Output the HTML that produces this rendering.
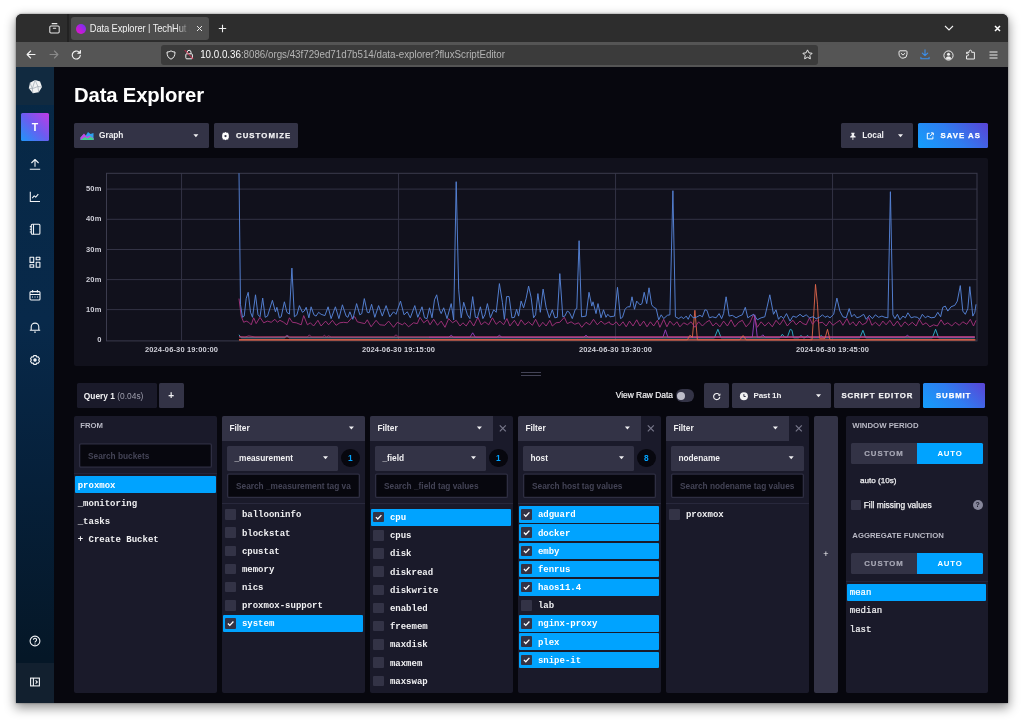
<!DOCTYPE html>
<html>
<head>
<meta charset="utf-8">
<title>Data Explorer</title>
<style>
*{box-sizing:border-box;margin:0;padding:0}
html,body{width:1024px;height:721px;overflow:hidden;background:#fff;font-family:"Liberation Sans",sans-serif;}
.abs{position:absolute}
#win{position:absolute;left:16px;top:14px;width:992px;height:689px;background:#07070e;will-change:transform;border-radius:6px 6px 0 0;overflow:hidden;}
#shadow{position:absolute;left:16px;top:14px;width:992px;height:689px;border-radius:6px 6px 0 0;box-shadow:0 4px 11px 1px rgba(0,0,0,.42),0 0 2px rgba(0,0,0,.5);}
#tabbar{position:absolute;left:0;top:0;width:992px;height:28px;background:#2d2d2d;}
#navbar{position:absolute;left:0;top:28px;width:992px;height:25px;background:#555555;}
#side{position:absolute;left:0;top:53px;width:38px;height:636px;background:linear-gradient(180deg,#072845 0%,#08294a 40%,#06203a 65%,#051727 93%,#051727 100%);}
.t{position:absolute;white-space:nowrap;line-height:1;color:#fff}
.b{font-weight:bold}
.mono{font-family:"Liberation Mono",monospace}
.btn{position:absolute;background:#333346;border-radius:1px}
.card{position:absolute;background:#1a1a2a;border-radius:2px;top:402px;height:276px;width:143px}
.inp{position:absolute;background:#07070e;border:1px solid #333346;border-radius:1px}
.row{position:absolute;height:17px;background:#00a3ff;border-radius:1px}
.cb{position:absolute;width:10px;height:10px;background:#333346;border-radius:1px}
.li{position:absolute;white-space:nowrap;line-height:1;color:#f1f1f3;font-family:"Liberation Mono",monospace;font-size:9px;font-weight:bold}
</style>
</head>
<body>
<div id="shadow"></div>
<div id="win">
<div id="tabbar"></div>
<div id="navbar"></div>

<!-- tab bar -->
<svg class="abs" style="left:32.800px;top:8.600px" width="11" height="11" viewBox="0 0 11 11" fill="none" stroke="#e8e8e8" stroke-width="1.050"><path d="M2.700 0.700h5.600" stroke-width="1.300"/><rect x="0.800" y="2.900" width="9.400" height="7" rx="1.100"/><path d="M4.300 5.300h2.400" stroke-linecap="round" stroke-width="1.100"/></svg>
<div class="abs" style="left:51px;top:0;width:1.600px;height:28px;background:#222222"></div>
<div class="abs" style="left:55px;top:3px;width:138px;height:22.5px;background:#4e4e4e;border-radius:3px"></div>
<div class="abs" style="left:60px;top:9.5px;width:10px;height:10px;border-radius:50%;background:linear-gradient(45deg,#e21bc4 0%,#c01ad8 40%,#8a2bea 75%,#6f2df0 100%)"></div>
<div class="t" id="tabtitle" style="left:73.8px;top:10.3px;font-size:9.4px;color:#f0f0f0;width:100px;overflow:hidden;letter-spacing:-0.12px;transform:scaleY(1.1);transform-origin:50% 80%;-webkit-mask-image:linear-gradient(90deg,#000 0,#000 86px,transparent 100px)">Data Explorer | TechHut | InfluxDB</div>
<svg class="abs" style="left:180px;top:11px" width="7" height="7" viewBox="0 0 7 7" stroke="#e6e6e6" stroke-width="1" fill="none"><path d="M1 1l5 5M6 1l-5 5"/></svg>
<svg class="abs" style="left:202px;top:10px" width="9" height="9" viewBox="0 0 9 9" stroke="#f0f0f0" stroke-width="1.1" fill="none"><path d="M4.5 0.8v7.4M0.8 4.5h7.4"/></svg>
<svg class="abs" style="left:928px;top:11px" width="10" height="6" viewBox="0 0 10 6" stroke="#f0f0f0" stroke-width="1.1" fill="none"><path d="M1 1l4 4 4-4"/></svg>
<svg class="abs" style="left:977.5px;top:11px" width="7" height="7" viewBox="0 0 7 7" stroke="#fff" stroke-width="1.5" fill="none"><path d="M1 1l5 5M6 1l-5 5"/></svg>
<!-- nav bar -->
<svg class="abs" style="left:10px;top:36px" width="10" height="9" viewBox="0 0 10 9" stroke="#f4f4f4" stroke-width="1.1" fill="none" stroke-linecap="round" stroke-linejoin="round"><path d="M9 4.5H1.2M4.6 1L1.1 4.5 4.6 8"/></svg>
<svg class="abs" style="left:33px;top:36px" width="10" height="9" viewBox="0 0 10 9" stroke="#8a8a8a" stroke-width="1.1" fill="none" stroke-linecap="round" stroke-linejoin="round"><path d="M1 4.5h7.8M5.4 1l3.5 3.5L5.4 8"/></svg>
<svg class="abs" style="left:55px;top:35.5px" width="11" height="10" viewBox="0 0 11 10" stroke="#f4f4f4" stroke-width="1.1" fill="none" stroke-linecap="round"><path d="M9.3 5.2a4 4 0 1 1-1.3-3.1"/><path d="M9.4 0.6v2.6H6.8" fill="#f4f4f4" stroke-linejoin="round"/></svg>
<div class="abs" style="left:145px;top:30.5px;width:656.5px;height:20px;background:#3b3b3b;border-radius:3px"></div>
<svg class="abs" style="left:149.5px;top:35.5px" width="10" height="10" viewBox="0 0 10 10" stroke="#ededed" stroke-width="1" fill="none" stroke-linejoin="round"><path d="M5 0.8C3.8 1.7 2.4 2 1 2c0 3.4 1 5.9 4 7.2 3-1.3 4-3.8 4-7.2-1.4 0-2.8-.3-4-1.200z"/></svg>
<svg class="abs" style="left:167.5px;top:35px" width="10" height="11" viewBox="0 0 10 11" fill="none" stroke="#ededed" stroke-width="1"><path d="M3.2 4.8V3.2a1.9 1.9 0 0 1 3.800 0v1.6"/><rect x="1.800" y="4.800" width="6.600" height="5" rx="1"/><path d="M0.800 1.200l8.400 8.800" stroke="#e22850" stroke-width="1"/></svg>
<div class="t" style="left:184.200px;top:35.800px;font-size:9.800px;color:#fbfbfb;letter-spacing:-0.020px;transform:scaleY(1.050);transform-origin:50% 80%">10.0.0.36<span style="color:#b4b4b4">:8086/orgs/43f729ed71d7b514/data-explorer?fluxScriptEditor</span></div>
<svg class="abs" style="left:786px;top:35px" width="11" height="11" viewBox="0 0 10 10" stroke="#ededed" stroke-width="0.9" fill="none" stroke-linejoin="round"><path d="M5 0.800l1.300 2.700 2.900.4-2.100 2.100.5 2.900L5 7.500 2.400 8.900l.5-2.900L.8 3.900l2.900-.4z"/></svg>
<svg class="abs" style="left:881.5px;top:36px" width="10" height="9" viewBox="0 0 10 9" stroke="#ededed" stroke-width="1" fill="none" stroke-linecap="round" stroke-linejoin="round"><path d="M1 1.800a1 1 0 0 1 1-1h6a1 1 0 0 1 1 1v2.400a4 4 0 0 1-8 0z"/><path d="M3.200 3.400L5 5.100l1.800-1.700"/></svg>
<svg class="abs" style="left:904px;top:35px" width="10" height="11" viewBox="0 0 10 11" stroke="#3b8eea" stroke-width="1.1" fill="none" stroke-linecap="round" stroke-linejoin="round"><path d="M5 0.800v5.800M2.300 4.100L5 6.700l2.700-2.600M0.900 8.300v1.500h8.200V8.300"/></svg>
<svg class="abs" style="left:926.5px;top:35.500px" width="11" height="11" viewBox="0 0 11 11" fill="none" stroke="#ededed" stroke-width="1"><circle cx="5.500" cy="5.500" r="4.600"/><circle cx="5.500" cy="4.200" r="1.500" fill="#ededed" stroke="none"/><path d="M2.600 8.300c.6-1.300 1.700-1.800 2.900-1.800s2.300.5 2.900 1.800c-.8.900-1.800 1.300-2.900 1.300s-2.100-.4-2.900-1.300z" fill="#ededed" stroke="none"/></svg>
<svg class="abs" style="left:949px;top:35px" width="11" height="11" viewBox="0 0 11 11" fill="none" stroke="#ededed" stroke-width="1" stroke-linejoin="round"><path d="M1.500 10V6.800h.9a1.100 1.100 0 0 0 0-2.200h-.9V3.300h2.700v-.900a1.200 1.200 0 0 1 2.400 0v.9h2.800V10z"/></svg>
<svg class="abs" style="left:972.500px;top:37px" width="9" height="8" viewBox="0 0 9 8" stroke="#ededed" stroke-width="1.100" fill="none"><path d="M0.500 1h8M0.500 4h8M0.500 7h8"/></svg>
<div id="side"></div>
<!--MAIN-->
<div class="abs" style="left:0px;top:53px;width:38px;height:38px;background:#112a40;"></div>
<div class="abs" style="left:0px;top:649px;width:38px;height:40px;background:#12202f;"></div>
<svg class="abs" style="left:12px;top:65px;overflow:visible;" width="15" height="15"><g transform="translate(0.3 0.7)"><path d="M6.800 0.300L11.800 1.900 13.700 7.300 10.400 12.600 4.600 13.500 0.500 8.600 1.700 3z" fill="#f1f2f3"/><path d="M6.800 0.300L9.600 6.800 13.700 7.300M9.600 6.800L4 9 0.500 8.600M4 9L6.800 0.300M4 9L4.600 13.500M9.600 6.800L10.400 12.600M1.700 3L4 9" stroke="#8f9aa6" stroke-width="0.600" fill="none"/></g></svg>
<div class="abs" style="left:5px;top:99px;width:28px;height:27.5px;background:linear-gradient(45deg,#1e96f8 0%,#6a5df0 50%,#c03ae6 100%);border-radius:1.500px"></div>
<div class="t b " style="left:15.85px;top:107.8px;font-size:10.5px;color:#fff;">T</div>
<svg class="abs" style="left:13px;top:144px;overflow:visible;" width="13" height="13"><g transform="translate(0 0.3)"><g fill="none" stroke="#f1f3f6" stroke-width="1.100" stroke-linejoin="round"><path d="M6 8.400V1.400M2.400 4.700L6 1.200 9.600 4.700M0.800 10.900h10.400"/></g></g></svg>
<svg class="abs" style="left:13px;top:176px;overflow:visible;" width="13" height="13"><g transform="translate(0 0.8)"><g fill="none" stroke="#f1f3f6" stroke-width="1.100" stroke-linejoin="round"><path d="M1.300 1v9.700H11M3.200 7.300l2-2.300 1.500 1.300 2.600-3"/></g></g></svg>
<svg class="abs" style="left:13px;top:209px;overflow:visible;" width="13" height="13"><g transform="translate(0 0.3)"><g fill="none" stroke="#f1f3f6" stroke-width="1.100" stroke-linejoin="round"><rect x="2.300" y="1" width="8.600" height="10" rx="1"/><path d="M4.500 1v10M0.800 3.300h1.500M0.800 6h1.500M0.800 8.700h1.500"/></g></g></svg>
<svg class="abs" style="left:13px;top:242px;overflow:visible;" width="13" height="13"><g transform="translate(0 0.2)"><g fill="none" stroke="#f1f3f6" stroke-width="1.100" stroke-linejoin="round"><rect x="1" y="1" width="3.700" height="5.200"/><rect x="7.200" y="1" width="3.700" height="2.600"/><rect x="1" y="8.600" width="3.700" height="2.400"/><rect x="7.200" y="6" width="3.700" height="5"/></g></g></svg>
<svg class="abs" style="left:13px;top:275px;overflow:visible;" width="13" height="13"><g transform="translate(0 0.2)"><g fill="none" stroke="#f1f3f6" stroke-width="1.100" stroke-linejoin="round"><rect x="1" y="2.400" width="10" height="8.400" rx="1"/><path d="M1 5.300h10M3.600 0.800v2.600M8.400 0.800v2.600M3 7.800h1M5.500 7.800h1M8 7.800h1"/></g></g></svg>
<svg class="abs" style="left:13px;top:307px;overflow:visible;" width="13" height="13"><g transform="translate(0 0.5)"><g fill="none" stroke="#f1f3f6" stroke-width="1.100" stroke-linejoin="round"><path d="M2.200 8.600V5.400a3.800 3.800 0 0 1 7.600 0v3.200M0.800 8.700h10.400M5.200 10.600h1.600"/></g></g></svg>
<svg class="abs" style="left:13px;top:340px;overflow:visible;" width="13" height="13"><g transform="translate(0 0)"><g fill="none" stroke="#f1f3f6" stroke-width="1.100" stroke-linejoin="round"><path d="M4.700 0.900h2.600l.5 1.400 1.400-.3 1.300 2.200-1 1.100 1 1.100-1.300 2.200-1.400-.300-.5 1.400H4.700l-.5-1.400-1.400.3L1.500 6.400l1-1.100-1-1.100 1.300-2.200 1.400.3z" transform="translate(0 0.700)"/><circle cx="6" cy="6" r="1.200" fill="#f1f3f6"/></g></g></svg>
<svg class="abs" style="left:13px;top:621px;overflow:visible;" width="13" height="13"><g transform="translate(0 0)"><g fill="none" stroke="#f1f3f6" stroke-width="1.100" stroke-linejoin="round"><circle cx="6" cy="6" r="4.900"/><path d="M4.400 4.800a1.600 1.600 0 1 1 2.400 1.400c-.5.300-.8.600-.8 1.200M6 8.600v.9"/></g></g></svg>
<svg class="abs" style="left:14px;top:663px;overflow:visible;" width="11" height="10"><g transform="translate(0 0.5)"><g fill="none" stroke="#f1f3f6" stroke-width="1.100"><rect x="0.600" y="0.600" width="8.800" height="7.800"/><path d="M3.400 0.600v7.800M5.600 2.800l1.700 1.700-1.700 1.700" /></g></g></svg>
<div class="t b " id="title" style="left:58px;top:70.5px;font-size:20.3px;color:#ffffff;letter-spacing:-0.15px">Data Explorer</div>
<div class="abs" style="left:58px;top:109px;width:134.5px;height:25px;background:#333346;border-radius:1.500px"></div>
<svg class="abs" style="left:64px;top:117px;overflow:visible;" width="14" height="10"><g transform="translate(0.5 0)"><path d="M0 9V6.500L3 3.500 5 5 7.500 1 10 3 13 2V9z" fill="#2fa0ee"/><path d="M0 9V6.500L3.500 2.500 6.500 6 9 4.500 13 7V9z" fill="#c04be6"/><path d="M0 9L4.500 6 7 7.500 10 5.500 13 7.500V9z" fill="#3fd08e"/></g></svg>
<div class="t b " id="gtxt" style="left:83px;top:116.9px;font-size:8.3px;color:#f1f1f3;">Graph</div>
<svg class="abs" style="left:177px;top:120px;overflow:visible;" width="6" height="4"><g transform="translate(0.4 0.2)"><path d="M0 0h5L2.500 3z" fill="#f1f1f3"/></g></svg>
<div class="abs" style="left:197.5px;top:109px;width:84.5px;height:25px;background:#333346;border-radius:1.500px"></div>
<svg class="abs" style="left:205px;top:117px;overflow:visible;" width="9" height="10"><g transform="translate(0.8 0.9)"><path d="M3.700 0L4.900 0.900 6.400 0.800 6.600 2.300 7.400 3.200 6.700 4.200 7.400 5.200 6.600 6.100 6.400 7.600 4.900 7.500 3.700 8.400 2.500 7.500 1 7.600 0.800 6.100 0 5.200 0.700 4.200 0 3.200 0.800 2.300 1 0.800 2.500 0.900z" fill="#fff"/><circle cx="3.700" cy="4.200" r="1.150" fill="#333346"/></g></svg>
<div class="t b " id="custxt" style="left:220px;top:117.6px;font-size:7.8px;color:#f1f1f3;letter-spacing:1.050px;-webkit-text-stroke:0.250px #f1f1f3">CUSTOMIZE</div>
<div class="abs" style="left:825px;top:109px;width:72px;height:25px;background:#333346;border-radius:1.500px"></div>
<svg class="abs" style="left:834px;top:118px;overflow:visible;" width="7" height="9"><g transform="translate(0.2 0.8)"><path d="M1 0h3.400v0.900h-0.500v1.900l1.500 1v1H3.100v2.400H2.300V4.800H0v-1l1.500-1V0.900H1z" fill="#f1f1f3"/></g></svg>
<div class="t b " id="loctxt" style="left:846.2px;top:116.9px;font-size:8.3px;color:#f1f1f3;">Local</div>
<svg class="abs" style="left:882px;top:120px;overflow:visible;" width="6" height="4"><g transform="translate(0 0.3)"><path d="M0 0h5L2.500 3z" fill="#f1f1f3"/></g></svg>
<div class="abs" style="left:902px;top:109px;width:70px;height:25px;background:linear-gradient(45deg,#139ffb 0%,#2f7df0 50%,#5a43d6 100%);border-radius:1.500px"></div>
<svg class="abs" style="left:910px;top:118px;overflow:visible;" width="9" height="9"><g transform="translate(0.7 0.3)"><g fill="none" stroke="#fff" stroke-width="1"><path d="M3 1H0.600v5.600h5.600V4.200"/><path d="M4.200 0.600h2.400v2.400M6.400 0.800L3.400 3.800"/></g></g></svg>
<div class="t b " id="savetxt" style="left:924.5px;top:117.5px;font-size:7.8px;color:#fff;letter-spacing:1.000px;-webkit-text-stroke:0.250px #fff">SAVE AS</div>
<div class="abs" style="left:58px;top:144px;width:914px;height:208px;background:#11111c;border-radius:2px"></div>
<svg class="abs" style="left:0;top:0" width="992" height="689" viewBox="0 0 992 689"><path d="M90.5 175.1H961" stroke="#333345" stroke-width="1"/><path d="M90.5 205.3H961" stroke="#333345" stroke-width="1"/><path d="M90.5 235.5H961" stroke="#333345" stroke-width="1"/><path d="M90.5 265.6H961" stroke="#333345" stroke-width="1"/><path d="M90.5 295.6H961" stroke="#333345" stroke-width="1"/><path d="M165.56 159.3V326.9" stroke="#333345" stroke-width="1"/><path d="M382.56 159.3V326.9" stroke="#333345" stroke-width="1"/><path d="M599.56 159.3V326.9" stroke="#333345" stroke-width="1"/><path d="M816.56 159.3V326.9" stroke="#333345" stroke-width="1"/><rect x="90.5" y="159.3" width="870.5" height="167.6" fill="none" stroke="#3b3b4d" stroke-width="1"/><polyline points="223.0,320.8 225.2,323.8 268.9,323.8 270.9,321.8 273.4,323.8 698.4,323.8 701.9,315.3 705.1,323.8 763.8,323.8 766.3,320.3 768.8,323.3 771.3,323.3 774.0,315.8 774.3,315.3 776.0,316.3 777.5,323.8 777.7,323.8 782.5,323.8 785.0,321.5 787.5,323.8 789.0,323.8 791.5,321.5 794.0,323.8 802.7,323.8 805.2,321.5 807.7,323.8 843.9,323.8 846.9,316.3 849.7,323.8 916.3,323.8 919.6,315.3 922.6,323.8 958.8,323.8" fill="none" stroke="#31b4d3" stroke-width="0.9" stroke-linejoin="round"/><polyline points="223.0,322.5 229.0,323.0 232.7,321.8 239.0,323.0 268.9,322.8 270.9,321.3 273.9,323.0 291.4,323.0 293.4,320.8 295.4,323.0 306.4,323.0 308.4,321.3 310.4,323.0 312.6,321.8 315.1,323.0 377.5,323.0 380.0,320.8 382.5,323.0 958.8,322.5" fill="none" stroke="#b13a8e" stroke-width="0.7" stroke-linejoin="round"/><polyline points="413.0,323.3 432.7,323.3 435.2,321.3 437.7,323.3 453.9,323.3 456.7,318.8 459.4,323.3 480.9,323.3 483.4,321.3 485.9,323.3 567.5,323.3 570.0,321.3 572.5,323.3 646.9,323.3 649.4,315.8 651.9,323.3 736.3,323.3 738.8,300.8 741.3,323.3 744.3,323.3 746.8,320.8 749.3,323.3 888.9,323.3 891.4,321.3 893.9,323.3 958.8,323.3" fill="none" stroke="#9a41c4" stroke-width="0.9" stroke-linejoin="round"/><polyline points="223.0,323.0 958.8,323.0" fill="none" stroke="#cf4560" stroke-width="0.8" stroke-linejoin="round"/><polyline points="223.0,325.8 671.4,325.8 673.9,321.3 676.4,323.3 678.9,296.3 681.4,325.8 723.8,325.8 727.1,321.5 730.1,325.8 796.0,325.8 797.7,300.8 799.5,270.4 801.5,290.8 803.5,324.3 809.0,324.3 811.5,315.3 814.0,325.8 958.8,325.8" fill="none" stroke="#e2664c" stroke-width="0.9" stroke-linejoin="round"/><polyline points="223.0,325.9 959.5,325.9" fill="none" stroke="#e2664c" stroke-width="1.4" stroke-linejoin="round"/><polyline points="223.0,284.6 225.2,302.1 227.7,308.3 230.2,307.1 232.7,308.3 235.2,310.8 237.7,303.8 240.2,309.6 244.0,303.3 247.7,308.8 251.5,307.1 255.2,308.3 258.9,305.3 261.4,308.3 263.9,306.3 267.7,308.3 270.9,310.8 273.4,303.8 276.4,308.3 280.2,308.8 285.2,310.8 287.7,301.6 291.4,310.8 294.4,308.8 297.6,312.0 301.9,306.3 305.1,312.0 309.6,307.1 312.6,310.8 316.4,306.3 320.1,311.3 323.9,308.8 327.6,308.3 331.4,308.8 336.3,303.3 338.8,302.8 341.3,307.8 345.1,308.8 348.8,309.6 351.3,305.8 355.1,312.8 360.1,306.3 363.8,310.8 368.8,311.3 372.6,307.1 377.5,313.3 381.3,308.3 386.3,310.8 388.8,308.8 392.5,312.8 397.5,308.8 401.3,309.6 404.0,303.3 407.7,308.8 411.5,305.8 414.0,310.8 417.7,305.3 421.5,311.3 425.2,307.1 429.0,313.3 432.7,304.6 436.5,308.8 440.2,306.3 444.0,312.0 446.9,308.8 450.2,312.0 453.9,306.3 457.7,312.0 461.9,303.3 465.2,310.8 468.9,307.8 472.7,310.8 476.4,303.8 480.2,310.3 483.9,307.1 487.6,310.8 490.9,304.6 493.9,312.0 498.4,306.3 501.9,312.0 505.1,305.8 508.9,310.8 512.6,307.8 516.4,311.3 519.6,305.3 523.4,312.8 526.8,308.3 530.1,312.0 533.8,306.3 536.3,312.0 540.1,308.8 543.8,308.3 548.3,303.3 551.3,309.6 555.1,307.8 558.8,310.3 562.6,308.8 565.8,313.3 570.0,308.3 573.8,310.8 577.5,305.3 581.3,310.8 585.0,307.1 588.8,310.3 593.3,307.8 594.0,309.6 597.0,310.8 600.2,307.8 603.5,312.0 607.0,307.8 610.2,312.8 613.5,307.1 617.0,312.0 620.7,305.8 624.0,312.0 627.7,307.1 631.0,312.8 634.4,307.8 637.7,312.0 641.4,306.3 643.9,313.3 647.7,305.3 650.9,312.8 653.9,307.1 657.7,311.3 660.9,307.8 663.9,312.8 667.7,308.8 671.4,310.8 675.1,307.8 678.9,313.3 682.6,307.8 686.4,312.0 690.1,308.3 693.4,306.3 696.9,312.0 700.1,308.8 703.9,312.8 707.6,307.1 711.4,312.0 715.1,305.8 718.8,312.8 722.6,308.3 726.3,306.3 730.1,312.8 733.8,308.8 737.6,300.3 741.3,313.3 745.1,307.8 748.8,312.0 752.6,308.3 756.3,312.8 760.0,306.3 763.8,310.8 767.5,305.3 771.3,312.0 774.0,308.8 777.0,306.3 780.2,310.8 784.0,307.1 787.0,309.6 790.2,310.8 793.5,303.8 796.5,310.3 800.2,305.8 803.5,308.8 806.5,308.3 810.2,312.0 813.5,307.1 816.9,311.3 820.2,308.8 823.9,306.3 826.9,311.3 830.9,304.6 833.9,310.8 836.9,307.8 840.2,312.0 843.4,307.1 846.4,310.8 850.2,308.8 852.7,303.3 855.9,311.3 859.4,308.3 863.4,312.0 866.9,307.1 870.1,310.8 873.9,306.3 877.6,312.0 881.4,307.1 885.1,312.8 888.9,307.8 892.6,311.3 896.3,308.3 900.1,312.0 903.3,305.3 906.8,310.8 910.1,308.8 913.8,312.8 917.6,310.8 921.3,312.0 925.1,305.8 928.3,310.8 931.8,308.8 935.8,312.0 939.3,308.3 943.3,311.3 946.8,307.8 950.8,310.3 954.3,305.3 957.5,312.0 960.0,306.3" fill="none" stroke="#a8327f" stroke-width="0.9" stroke-linejoin="round"/><polyline points="223.0,159.2 224.5,290.8 226.5,303.3 228.2,302.1 230.2,284.6 232.2,278.3 234.5,298.3 236.5,303.3 239.5,280.8 242.0,300.8 244.0,302.8 246.7,284.1 249.2,303.3 251.5,302.1 256.4,286.3 259.4,297.8 260.9,293.3 263.4,303.8 265.2,302.8 268.4,287.8 270.9,298.3 273.4,300.1 275.9,254.1 278.4,302.8 280.9,300.8 283.4,291.6 286.4,298.3 288.2,297.1 290.2,293.3 292.9,303.8 295.1,292.8 297.9,300.8 300.1,302.1 302.6,298.3 305.1,300.3 308.9,301.6 312.1,292.8 315.1,304.6 319.4,292.8 322.9,304.6 326.4,290.8 330.1,302.1 331.9,303.3 333.9,297.8 336.8,305.3 340.6,289.6 343.8,300.8 345.8,299.6 348.3,284.6 351.3,298.3 353.1,298.8 355.6,290.3 358.8,303.3 362.6,291.6 366.3,302.1 370.1,291.6 373.8,302.8 377.5,297.8 380.0,300.3 384.5,287.1 388.0,300.8 391.3,297.8 394.3,303.8 398.8,291.6 401.8,303.3 406.0,292.8 408.5,303.8 411.0,304.6 413.5,293.8 416.0,303.8 418.5,285.8 420.7,280.8 423.5,295.8 425.2,299.6 427.7,293.8 431.0,304.6 435.2,289.6 437.7,305.8 440.2,167.7 442.7,275.8 445.2,303.8 447.7,288.3 451.4,300.8 453.9,304.6 456.7,282.6 459.4,303.3 461.4,303.8 464.4,292.8 466.9,304.6 468.9,300.8 471.4,289.6 474.4,303.8 477.7,295.8 480.2,298.3 483.4,269.6 486.4,288.3 488.4,305.3 490.6,282.6 493.1,282.6 495.9,303.8 498.4,303.3 500.6,295.3 502.6,302.1 505.1,287.1 507.6,293.8 510.1,284.6 512.6,272.1 515.1,283.3 517.6,303.8 519.6,300.8 521.9,279.6 524.3,298.3 527.1,275.1 530.1,293.3 533.3,303.8 536.3,295.8 538.8,303.8 541.3,303.3 543.8,259.6 546.8,302.8 548.8,302.1 551.3,297.1 553.3,298.3 556.3,304.6 559.3,295.3 560.8,294.6 563.1,226.7 565.5,302.8 570.0,302.1 573.0,278.3 575.8,292.1 577.0,287.8 580.0,299.6 582.0,289.6 585.0,303.8 587.5,295.8 590.0,303.3 591.8,300.3 594.0,302.8 598.5,302.1 601.5,273.3 604.5,304.6 606.5,303.3 609.0,295.3 611.5,292.8 614.0,292.8 616.0,282.8 618.5,295.3 620.7,287.1 624.0,290.8 626.0,289.6 628.2,278.3 630.7,289.6 633.0,273.8 635.7,290.8 637.7,293.3 640.2,294.6 642.7,305.8 645.2,300.8 647.7,304.6 651.4,301.3 653.9,300.8 656.9,176.7 659.4,302.8 662.7,304.6 665.2,302.8 667.7,304.6 670.2,302.1 672.2,305.3 674.4,300.3 677.1,303.8 680.1,303.3 683.9,301.3 686.4,302.8 688.9,295.8 690.9,296.3 693.4,303.8 696.4,302.8 700.1,303.8 703.1,299.6 705.6,304.6 707.6,299.6 710.1,282.8 713.1,302.1 716.3,301.3 720.1,303.8 723.1,302.1 726.3,300.8 729.3,293.3 731.8,303.8 734.3,302.1 737.6,300.3 741.3,305.8 745.1,303.8 748.8,302.8 751.3,292.1 753.8,280.8 757.5,300.3 760.0,295.8 762.5,305.3 765.0,302.1 767.5,304.6 770.5,299.6 774.0,307.1 777.0,302.1 780.2,303.3 784.0,300.3 787.0,302.8 790.2,300.8 793.5,303.8 797.0,302.8 800.2,304.6 803.5,303.3 806.5,300.8 809.0,303.3 811.5,302.1 814.0,303.8 817.7,300.3 820.9,284.1 823.9,297.1 826.9,302.8 830.2,303.8 833.2,294.6 835.7,302.8 838.2,300.3 840.9,303.8 843.9,302.8 847.7,300.3 850.2,305.3 853.4,301.3 856.4,304.6 859.4,300.8 862.6,303.3 865.9,302.1 868.9,303.3 871.9,303.8 874.4,177.7 876.9,300.8 878.9,304.6 881.4,300.3 883.9,305.8 886.9,302.1 889.4,303.8 891.9,298.8 895.1,303.8 898.3,302.8 901.3,303.3 903.8,305.3 906.3,300.3 909.3,303.8 911.8,302.1 915.1,303.8 918.8,303.3 921.8,298.3 924.6,302.8 926.8,293.3 929.3,292.1 931.8,297.1 935.0,292.8 938.8,291.3 941.3,287.1 944.3,271.6 946.8,297.1 949.3,300.3 951.8,294.6 953.8,272.6 956.8,302.1 958.8,298.3 960.0,290.3" fill="none" stroke="#5583d6" stroke-width="0.95" stroke-linejoin="round"/></svg>
<div class="t b ax" style="left:-16px;top:171.1px;font-size:7.5px;color:#cfcfd8;letter-spacing:0.150px;left:auto;right:906.5px">50m</div>
<div class="t b ax" style="left:-16px;top:201.3px;font-size:7.5px;color:#cfcfd8;letter-spacing:0.150px;left:auto;right:906.5px">40m</div>
<div class="t b ax" style="left:-16px;top:231.5px;font-size:7.5px;color:#cfcfd8;letter-spacing:0.150px;left:auto;right:906.5px">30m</div>
<div class="t b ax" style="left:-16px;top:261.6px;font-size:7.5px;color:#cfcfd8;letter-spacing:0.150px;left:auto;right:906.5px">20m</div>
<div class="t b ax" style="left:-16px;top:291.6px;font-size:7.5px;color:#cfcfd8;letter-spacing:0.150px;left:auto;right:906.5px">10m</div>
<div class="t b ax" style="left:-16px;top:321.5px;font-size:7.5px;color:#cfcfd8;left:auto;right:906.7px">0</div>
<div class="t b ax" style="left:115.56px;top:331.8px;font-size:7.5px;color:#cfcfd8;letter-spacing:0.150px;width:100px;text-align:center">2024-06-30 19:00:00</div>
<div class="t b ax" style="left:332.56px;top:331.8px;font-size:7.5px;color:#cfcfd8;letter-spacing:0.150px;width:100px;text-align:center">2024-06-30 19:15:00</div>
<div class="t b ax" style="left:549.56px;top:331.8px;font-size:7.5px;color:#cfcfd8;letter-spacing:0.150px;width:100px;text-align:center">2024-06-30 19:30:00</div>
<div class="t b ax" style="left:766.56px;top:331.8px;font-size:7.5px;color:#cfcfd8;letter-spacing:0.150px;width:100px;text-align:center">2024-06-30 19:45:00</div>
<div class="abs" style="left:504.5px;top:357.9px;width:20px;height:1px;background:#434356;"></div>
<div class="abs" style="left:504.5px;top:360.6px;width:20px;height:1px;background:#434356;"></div>
<div class="abs" style="left:60.5px;top:369px;width:80.5px;height:25px;background:#1a1a2a;border-radius:1.500px"></div>
<div class="t b " id="q1" style="left:67.8px;top:377.6px;font-size:8.4px;color:#f1f1f3;">Query 1 <span style="font-weight:normal;color:#9e9ead">(0.04s)</span></div>
<div class="abs" style="left:143px;top:369px;width:25px;height:25px;background:#333346;border-radius:1.500px"></div>
<div class="t b " style="left:152.3px;top:376.8px;font-size:10px;color:#f1f1f3;">+</div>
<div class="t " id="vrd" style="left:599.8px;top:377.3px;font-size:8.4px;color:#f1f1f3;-webkit-text-stroke:0.200px #f1f1f3">View Raw Data</div>
<div class="abs" style="left:659.7px;top:375.4px;width:18.6px;height:12.4px;background:#333346;border-radius:6.200px"></div>
<div class="abs" style="left:661.35px;top:377.9px;width:7.8px;height:7.8px;background:#bdbdc9;border-radius:50%"></div>
<div class="abs" style="left:688.3px;top:369px;width:25px;height:25px;background:#333346;border-radius:1.500px"></div>
<svg class="abs" style="left:696px;top:378px;overflow:visible;" width="9" height="9"><g transform="translate(0.7 0.3)"><g fill="none" stroke="#f1f1f3" stroke-width="1.100"><path d="M6.900 3.100A3.100 3.100 0 1 0 7.100 4.600"/><path d="M5.400 2.900L7.200 3.300 7.400 1.400" stroke-width="0.800"/></g></g></svg>
<div class="abs" style="left:716px;top:369px;width:99.2px;height:25px;background:#333346;border-radius:1.500px"></div>
<svg class="abs" style="left:723px;top:378px;overflow:visible;" width="9" height="9"><g transform="translate(0.9 0.3)"><circle cx="4" cy="4" r="4" fill="#f1f1f3"/><path d="M4 1.800V4.200H5.800" stroke="#333346" stroke-width="1" fill="none"/></g></svg>
<div class="t b " id="past" style="left:737.4px;top:378px;font-size:8px;color:#f1f1f3;letter-spacing:-0.080px">Past 1h</div>
<svg class="abs" style="left:800px;top:380px;overflow:visible;" width="6" height="4"><g transform="translate(0 0.3)"><path d="M0 0h5L2.500 3z" fill="#f1f1f3"/></g></svg>
<div class="abs" style="left:817.5px;top:369px;width:86.7px;height:25px;background:#333346;border-radius:1.500px"></div>
<div class="t b " id="scr" style="left:825.4px;top:377.7px;font-size:7.8px;color:#f1f1f3;letter-spacing:0.900px;-webkit-text-stroke:0.250px #f1f1f3">SCRIPT EDITOR</div>
<div class="abs" style="left:906.5px;top:369px;width:62.7px;height:25px;background:linear-gradient(45deg,#139ffb 0%,#2f7df0 50%,#5a43d6 100%);border-radius:1.500px"></div>
<div class="t b " id="sub" style="left:920px;top:377.7px;font-size:7.8px;color:#fff;letter-spacing:0.900px;-webkit-text-stroke:0.250px #fff">SUBMIT</div>
<div class="abs" style="left:58px;top:402px;width:143px;height:276.5px;background:#1a1a2a;border-radius:2px"></div>
<div class="t b " id="from" style="left:64.3px;top:407.6px;font-size:7.7px;color:#b9b9c5;">FROM</div>
<svg class="abs" style="left:62px;top:428px;overflow:visible;" width="136" height="28"><g transform="translate(0 0.2)"><rect x="1.65" y="1.65" width="131.7" height="23.3" rx="1.200" fill="#07070e" stroke="#2e2e42" stroke-width="1.300"/></g></svg>
<div class="t b " id="sb" style="left:72px;top:437.8px;font-size:8.3px;color:#444456;">Search buckets</div>
<div class="abs" style="left:58px;top:458.7px;width:143px;height:1px;background:#24243a;"></div>
<div class="abs" style="left:59px;top:462.2px;width:141px;height:16.8px;background:#00a3ff;border-radius:1px"></div>
<div class="li" style="left:61.7px;top:467.6px;color:#fff;">proxmox</div>
<div class="li" style="left:61.7px;top:485.6px;color:#f1f1f3;">_monitoring</div>
<div class="li" style="left:61.7px;top:503.8px;color:#f1f1f3;">_tasks</div>
<div class="li" style="left:61.7px;top:521.9px;color:#f1f1f3;">+ Create Bucket</div>
<div class="abs" style="left:206px;top:402px;width:143px;height:276.5px;background:#1a1a2a;border-radius:2px"></div>
<div class="abs" style="left:206px;top:402px;width:143px;height:24.5px;background:#333346;border-radius:2px 2px 0 0"></div>
<div class="t b flt" style="left:213.4px;top:410px;font-size:8.3px;color:#f1f1f3;">Filter</div>
<svg class="abs" style="left:332px;top:412px;overflow:visible;" width="6" height="4"><g transform="translate(0.9 0.5)"><path d="M0 0h5L2.500 3z" fill="#f1f1f3"/></g></svg>
<div class="abs" style="left:211px;top:431.7px;width:111.3px;height:25px;background:#333346;border-radius:1.500px"></div>
<div class="t b key" style="left:218.4px;top:440.3px;font-size:8.3px;color:#f1f1f3;">_measurement</div>
<svg class="abs" style="left:307px;top:442px;overflow:visible;" width="6" height="4"><g transform="translate(0 0.3)"><path d="M0 0h5L2.500 3z" fill="#f1f1f3"/></g></svg>
<div class="abs" style="left:325px;top:434.8px;width:18.6px;height:18.6px;background:#07070e;border-radius:50%"></div>
<div class="t b " style="left:325px;top:440.2px;font-size:8.4px;color:#00a3ff;width:18.600px;text-align:center">1</div>
<svg class="abs" style="left:210px;top:458px;overflow:visible;" width="136" height="28"><g transform="translate(0 0.4)"><rect x="1.65" y="1.65" width="131.7" height="23.3" rx="1.200" fill="#07070e" stroke="#2e2e42" stroke-width="1.300"/></g></svg>
<div class="t b srch" style="left:220px;top:468px;font-size:8.3px;color:#444456;max-width:117.500px;overflow:hidden;padding-bottom:3px">Search _measurement tag va</div>
<div class="abs" style="left:206px;top:489.3px;width:143px;height:1px;background:#28283c;"></div>
<div class="abs" style="left:209.3px;top:495.2px;width:10.5px;height:10.5px;background:#333346;border-radius:1px"></div>
<div class="li" style="left:225.9px;top:497.4px;color:#f1f1f3;">ballooninfo</div>
<div class="abs" style="left:209.3px;top:513.38px;width:10.5px;height:10.5px;background:#333346;border-radius:1px"></div>
<div class="li" style="left:225.9px;top:515.58px;color:#f1f1f3;">blockstat</div>
<div class="abs" style="left:209.3px;top:531.56px;width:10.5px;height:10.5px;background:#333346;border-radius:1px"></div>
<div class="li" style="left:225.9px;top:533.76px;color:#f1f1f3;">cpustat</div>
<div class="abs" style="left:209.3px;top:549.74px;width:10.5px;height:10.5px;background:#333346;border-radius:1px"></div>
<div class="li" style="left:225.9px;top:551.94px;color:#f1f1f3;">memory</div>
<div class="abs" style="left:209.3px;top:567.92px;width:10.5px;height:10.5px;background:#333346;border-radius:1px"></div>
<div class="li" style="left:225.9px;top:570.12px;color:#f1f1f3;">nics</div>
<div class="abs" style="left:209.3px;top:586.1px;width:10.5px;height:10.5px;background:#333346;border-radius:1px"></div>
<div class="li" style="left:225.9px;top:588.3px;color:#f1f1f3;">proxmox-support</div>
<div class="abs" style="left:207.1px;top:601.28px;width:140.4px;height:16.7px;background:#00a3ff;border-radius:1px"></div>
<div class="abs" style="left:209.3px;top:604.28px;width:10.5px;height:10.5px;background:#333346;border-radius:1px"></div>
<svg class="abs" style="left:211px;top:606px;overflow:visible;" width="8" height="7"><g transform="translate(0.1 0.48)"><path d="M0.800 3l1.900 1.900L6.300 1" fill="none" stroke="#fff" stroke-width="1.300"/></g></svg>
<div class="li" style="left:225.9px;top:606.48px;color:#fff;">system</div>
<div class="abs" style="left:354px;top:402px;width:143px;height:276.5px;background:#1a1a2a;border-radius:2px"></div>
<div class="abs" style="left:354px;top:402px;width:123px;height:24.5px;background:#333346;border-radius:2px 0 0 0"></div>
<div class="t b flt" style="left:361.4px;top:410px;font-size:8.3px;color:#f1f1f3;">Filter</div>
<svg class="abs" style="left:460px;top:412px;overflow:visible;" width="6" height="4"><g transform="translate(0.9 0.5)"><path d="M0 0h5L2.500 3z" fill="#f1f1f3"/></g></svg>
<svg class="abs" style="left:483px;top:410px;overflow:visible;" width="8" height="8"><g transform="translate(0.3 0.8)"><path d="M0.500 0.500l6 6M6.500 0.500L0.500 6.500" stroke="#77778a" stroke-width="1.200" fill="none"/></g></svg>
<div class="abs" style="left:359px;top:431.7px;width:111.3px;height:25px;background:#333346;border-radius:1.500px"></div>
<div class="t b key" style="left:366.4px;top:440.3px;font-size:8.3px;color:#f1f1f3;">_field</div>
<svg class="abs" style="left:455px;top:442px;overflow:visible;" width="6" height="4"><g transform="translate(0 0.3)"><path d="M0 0h5L2.500 3z" fill="#f1f1f3"/></g></svg>
<div class="abs" style="left:473px;top:434.8px;width:18.6px;height:18.6px;background:#07070e;border-radius:50%"></div>
<div class="t b " style="left:473px;top:440.2px;font-size:8.4px;color:#00a3ff;width:18.600px;text-align:center">1</div>
<svg class="abs" style="left:358px;top:458px;overflow:visible;" width="136" height="28"><g transform="translate(0 0.4)"><rect x="1.65" y="1.65" width="131.7" height="23.3" rx="1.200" fill="#07070e" stroke="#2e2e42" stroke-width="1.300"/></g></svg>
<div class="t b srch" style="left:368px;top:468px;font-size:8.3px;color:#444456;max-width:117.500px;overflow:hidden;padding-bottom:3px">Search _field tag values</div>
<div class="abs" style="left:354px;top:489.3px;width:143px;height:1px;background:#28283c;"></div>
<div class="abs" style="left:355.1px;top:494.9px;width:140.4px;height:16.7px;background:#00a3ff;border-radius:1px"></div>
<div class="abs" style="left:357.3px;top:497.9px;width:10.5px;height:10.5px;background:#333346;border-radius:1px"></div>
<svg class="abs" style="left:359px;top:500px;overflow:visible;" width="8" height="7"><g transform="translate(0.1 0.1)"><path d="M0.800 3l1.900 1.900L6.300 1" fill="none" stroke="#fff" stroke-width="1.300"/></g></svg>
<div class="li" style="left:373.9px;top:500.1px;color:#fff;">cpu</div>
<div class="abs" style="left:357.3px;top:516.08px;width:10.5px;height:10.5px;background:#333346;border-radius:1px"></div>
<div class="li" style="left:373.9px;top:518.28px;color:#f1f1f3;">cpus</div>
<div class="abs" style="left:357.3px;top:534.26px;width:10.5px;height:10.5px;background:#333346;border-radius:1px"></div>
<div class="li" style="left:373.9px;top:536.46px;color:#f1f1f3;">disk</div>
<div class="abs" style="left:357.3px;top:552.44px;width:10.5px;height:10.5px;background:#333346;border-radius:1px"></div>
<div class="li" style="left:373.9px;top:554.64px;color:#f1f1f3;">diskread</div>
<div class="abs" style="left:357.3px;top:570.62px;width:10.5px;height:10.5px;background:#333346;border-radius:1px"></div>
<div class="li" style="left:373.9px;top:572.82px;color:#f1f1f3;">diskwrite</div>
<div class="abs" style="left:357.3px;top:588.8px;width:10.5px;height:10.5px;background:#333346;border-radius:1px"></div>
<div class="li" style="left:373.9px;top:591px;color:#f1f1f3;">enabled</div>
<div class="abs" style="left:357.3px;top:606.98px;width:10.5px;height:10.5px;background:#333346;border-radius:1px"></div>
<div class="li" style="left:373.9px;top:609.18px;color:#f1f1f3;">freemem</div>
<div class="abs" style="left:357.3px;top:625.16px;width:10.5px;height:10.5px;background:#333346;border-radius:1px"></div>
<div class="li" style="left:373.9px;top:627.36px;color:#f1f1f3;">maxdisk</div>
<div class="abs" style="left:357.3px;top:643.34px;width:10.5px;height:10.5px;background:#333346;border-radius:1px"></div>
<div class="li" style="left:373.9px;top:645.54px;color:#f1f1f3;">maxmem</div>
<div class="abs" style="left:357.3px;top:661.52px;width:10.5px;height:10.5px;background:#333346;border-radius:1px"></div>
<div class="li" style="left:373.9px;top:663.72px;color:#f1f1f3;">maxswap</div>
<div class="abs" style="left:502px;top:402px;width:143px;height:276.5px;background:#1a1a2a;border-radius:2px"></div>
<div class="abs" style="left:502px;top:402px;width:123px;height:24.5px;background:#333346;border-radius:2px 0 0 0"></div>
<div class="t b flt" style="left:509.4px;top:410px;font-size:8.3px;color:#f1f1f3;">Filter</div>
<svg class="abs" style="left:608px;top:412px;overflow:visible;" width="6" height="4"><g transform="translate(0.9 0.5)"><path d="M0 0h5L2.500 3z" fill="#f1f1f3"/></g></svg>
<svg class="abs" style="left:631px;top:410px;overflow:visible;" width="8" height="8"><g transform="translate(0.3 0.8)"><path d="M0.500 0.500l6 6M6.500 0.500L0.500 6.500" stroke="#77778a" stroke-width="1.200" fill="none"/></g></svg>
<div class="abs" style="left:507px;top:431.7px;width:111.3px;height:25px;background:#333346;border-radius:1.500px"></div>
<div class="t b key" style="left:514.4px;top:440.3px;font-size:8.3px;color:#f1f1f3;">host</div>
<svg class="abs" style="left:603px;top:442px;overflow:visible;" width="6" height="4"><g transform="translate(0 0.3)"><path d="M0 0h5L2.500 3z" fill="#f1f1f3"/></g></svg>
<div class="abs" style="left:621px;top:434.8px;width:18.6px;height:18.6px;background:#07070e;border-radius:50%"></div>
<div class="t b " style="left:621px;top:440.2px;font-size:8.4px;color:#00a3ff;width:18.600px;text-align:center">8</div>
<svg class="abs" style="left:506px;top:458px;overflow:visible;" width="136" height="28"><g transform="translate(0 0.4)"><rect x="1.65" y="1.65" width="131.7" height="23.3" rx="1.200" fill="#07070e" stroke="#2e2e42" stroke-width="1.300"/></g></svg>
<div class="t b srch" style="left:516px;top:468px;font-size:8.3px;color:#444456;max-width:117.500px;overflow:hidden;padding-bottom:3px">Search host tag values</div>
<div class="abs" style="left:502px;top:489.3px;width:143px;height:1px;background:#28283c;"></div>
<div class="abs" style="left:503.1px;top:492.2px;width:140.4px;height:16.7px;background:#00a3ff;border-radius:1px"></div>
<div class="abs" style="left:505.3px;top:495.2px;width:10.5px;height:10.5px;background:#333346;border-radius:1px"></div>
<svg class="abs" style="left:507px;top:497px;overflow:visible;" width="8" height="7"><g transform="translate(0.1 0.4)"><path d="M0.800 3l1.900 1.900L6.300 1" fill="none" stroke="#fff" stroke-width="1.300"/></g></svg>
<div class="li" style="left:521.9px;top:497.4px;color:#fff;">adguard</div>
<div class="abs" style="left:503.1px;top:510.38px;width:140.4px;height:16.7px;background:#00a3ff;border-radius:1px"></div>
<div class="abs" style="left:505.3px;top:513.38px;width:10.5px;height:10.5px;background:#333346;border-radius:1px"></div>
<svg class="abs" style="left:507px;top:515px;overflow:visible;" width="8" height="7"><g transform="translate(0.1 0.58)"><path d="M0.800 3l1.900 1.900L6.300 1" fill="none" stroke="#fff" stroke-width="1.300"/></g></svg>
<div class="li" style="left:521.9px;top:515.58px;color:#fff;">docker</div>
<div class="abs" style="left:503.1px;top:528.56px;width:140.4px;height:16.7px;background:#00a3ff;border-radius:1px"></div>
<div class="abs" style="left:505.3px;top:531.56px;width:10.5px;height:10.5px;background:#333346;border-radius:1px"></div>
<svg class="abs" style="left:507px;top:533px;overflow:visible;" width="8" height="7"><g transform="translate(0.1 0.76)"><path d="M0.800 3l1.900 1.900L6.300 1" fill="none" stroke="#fff" stroke-width="1.300"/></g></svg>
<div class="li" style="left:521.9px;top:533.76px;color:#fff;">emby</div>
<div class="abs" style="left:503.1px;top:546.74px;width:140.4px;height:16.7px;background:#00a3ff;border-radius:1px"></div>
<div class="abs" style="left:505.3px;top:549.74px;width:10.5px;height:10.5px;background:#333346;border-radius:1px"></div>
<svg class="abs" style="left:507px;top:551px;overflow:visible;" width="8" height="7"><g transform="translate(0.1 0.94)"><path d="M0.800 3l1.900 1.900L6.300 1" fill="none" stroke="#fff" stroke-width="1.300"/></g></svg>
<div class="li" style="left:521.9px;top:551.94px;color:#fff;">fenrus</div>
<div class="abs" style="left:503.1px;top:564.92px;width:140.4px;height:16.7px;background:#00a3ff;border-radius:1px"></div>
<div class="abs" style="left:505.3px;top:567.92px;width:10.5px;height:10.5px;background:#333346;border-radius:1px"></div>
<svg class="abs" style="left:507px;top:570px;overflow:visible;" width="8" height="7"><g transform="translate(0.1 0.12)"><path d="M0.800 3l1.900 1.900L6.300 1" fill="none" stroke="#fff" stroke-width="1.300"/></g></svg>
<div class="li" style="left:521.9px;top:570.12px;color:#fff;">haos11.4</div>
<div class="abs" style="left:505.3px;top:586.1px;width:10.5px;height:10.5px;background:#333346;border-radius:1px"></div>
<div class="li" style="left:521.9px;top:588.3px;color:#f1f1f3;">lab</div>
<div class="abs" style="left:503.1px;top:601.28px;width:140.4px;height:16.7px;background:#00a3ff;border-radius:1px"></div>
<div class="abs" style="left:505.3px;top:604.28px;width:10.5px;height:10.5px;background:#333346;border-radius:1px"></div>
<svg class="abs" style="left:507px;top:606px;overflow:visible;" width="8" height="7"><g transform="translate(0.1 0.48)"><path d="M0.800 3l1.900 1.900L6.300 1" fill="none" stroke="#fff" stroke-width="1.300"/></g></svg>
<div class="li" style="left:521.9px;top:606.48px;color:#fff;">nginx-proxy</div>
<div class="abs" style="left:503.1px;top:619.46px;width:140.4px;height:16.7px;background:#00a3ff;border-radius:1px"></div>
<div class="abs" style="left:505.3px;top:622.46px;width:10.5px;height:10.5px;background:#333346;border-radius:1px"></div>
<svg class="abs" style="left:507px;top:624px;overflow:visible;" width="8" height="7"><g transform="translate(0.1 0.66)"><path d="M0.800 3l1.900 1.900L6.300 1" fill="none" stroke="#fff" stroke-width="1.300"/></g></svg>
<div class="li" style="left:521.9px;top:624.66px;color:#fff;">plex</div>
<div class="abs" style="left:503.1px;top:637.64px;width:140.4px;height:16.7px;background:#00a3ff;border-radius:1px"></div>
<div class="abs" style="left:505.3px;top:640.64px;width:10.5px;height:10.5px;background:#333346;border-radius:1px"></div>
<svg class="abs" style="left:507px;top:642px;overflow:visible;" width="8" height="7"><g transform="translate(0.1 0.84)"><path d="M0.800 3l1.900 1.900L6.300 1" fill="none" stroke="#fff" stroke-width="1.300"/></g></svg>
<div class="li" style="left:521.9px;top:642.84px;color:#fff;">snipe-it</div>
<div class="abs" style="left:650px;top:402px;width:143px;height:276.5px;background:#1a1a2a;border-radius:2px"></div>
<div class="abs" style="left:650px;top:402px;width:123px;height:24.5px;background:#333346;border-radius:2px 0 0 0"></div>
<div class="t b flt" style="left:657.4px;top:410px;font-size:8.3px;color:#f1f1f3;">Filter</div>
<svg class="abs" style="left:756px;top:412px;overflow:visible;" width="6" height="4"><g transform="translate(0.9 0.5)"><path d="M0 0h5L2.500 3z" fill="#f1f1f3"/></g></svg>
<svg class="abs" style="left:779px;top:410px;overflow:visible;" width="8" height="8"><g transform="translate(0.3 0.8)"><path d="M0.500 0.500l6 6M6.500 0.500L0.500 6.500" stroke="#77778a" stroke-width="1.200" fill="none"/></g></svg>
<div class="abs" style="left:655px;top:431.7px;width:133px;height:25px;background:#333346;border-radius:1.500px"></div>
<div class="t b key" style="left:662.4px;top:440.3px;font-size:8.3px;color:#f1f1f3;">nodename</div>
<svg class="abs" style="left:772px;top:442px;overflow:visible;" width="6" height="4"><g transform="translate(0.7 0.3)"><path d="M0 0h5L2.500 3z" fill="#f1f1f3"/></g></svg>
<svg class="abs" style="left:654px;top:458px;overflow:visible;" width="136" height="28"><g transform="translate(0 0.4)"><rect x="1.65" y="1.65" width="131.7" height="23.3" rx="1.200" fill="#07070e" stroke="#2e2e42" stroke-width="1.300"/></g></svg>
<div class="t b srch" style="left:664px;top:468px;font-size:8.3px;color:#444456;max-width:117.500px;overflow:hidden;padding-bottom:3px">Search nodename tag values</div>
<div class="abs" style="left:650px;top:489.3px;width:143px;height:1px;background:#28283c;"></div>
<div class="abs" style="left:653.3px;top:495.2px;width:10.5px;height:10.5px;background:#333346;border-radius:1px"></div>
<div class="li" style="left:669.9px;top:497.4px;color:#f1f1f3;">proxmox</div>
<div class="abs" style="left:797.6px;top:402px;width:24.8px;height:276.5px;background:#333346;border-radius:2px"></div>
<div class="t " style="left:807.3px;top:536.3px;font-size:9px;color:#f1f1f3;">+</div>
<div class="abs" style="left:830px;top:402px;width:142px;height:276.5px;background:#1a1a2a;border-radius:2px"></div>
<div class="t b " id="wp" style="left:836.3px;top:407.8px;font-size:7.8px;color:#b9b9c5;">WINDOW PERIOD</div>
<div class="abs" style="left:835px;top:429px;width:132px;height:21px;background:#333346;border-radius:1.500px"></div>
<div class="abs" style="left:901px;top:429px;width:66px;height:21px;background:#00a3ff;border-radius:0 1.500px 1.500px 0"></div>
<div class="t b " style="left:835px;top:435.8px;font-size:7.8px;color:#a8a8b6;width:66px;text-align:center;letter-spacing:1.000px;-webkit-text-stroke:0.200px #a8a8b6">CUSTOM</div>
<div class="t b " style="left:901px;top:435.8px;font-size:7.8px;color:#fff;width:66px;text-align:center;letter-spacing:0.800px">AUTO</div>
<div class="t " id="auto" style="left:844px;top:463px;font-size:8.1px;color:#f1f1f3;-webkit-text-stroke:0.250px #f1f1f3">auto (10s)</div>
<div class="abs" style="left:835px;top:485.5px;width:10.2px;height:10.2px;background:#333346;border-radius:1px"></div>
<div class="t " id="fmv" style="left:847.7px;top:486.5px;font-size:8.4px;color:#f1f1f3;-webkit-text-stroke:0.250px #f1f1f3">Fill missing values</div>
<div class="abs" style="left:956.5px;top:485.5px;width:10.4px;height:10.4px;background:#86869a;border-radius:50%"></div>
<div class="t b " style="left:956.5px;top:487.3px;font-size:7px;color:#1a1a2a;width:10.400px;text-align:center">?</div>
<div class="t b " id="af" style="left:836.3px;top:517.9px;font-size:7.75px;color:#b9b9c5;">AGGREGATE FUNCTION</div>
<div class="abs" style="left:835px;top:539px;width:132px;height:21px;background:#333346;border-radius:1.500px"></div>
<div class="abs" style="left:901px;top:539px;width:66px;height:21px;background:#00a3ff;border-radius:0 1.500px 1.500px 0"></div>
<div class="t b " style="left:835px;top:545.8px;font-size:7.8px;color:#a8a8b6;width:66px;text-align:center;letter-spacing:1.000px;-webkit-text-stroke:0.200px #a8a8b6">CUSTOM</div>
<div class="t b " style="left:901px;top:545.8px;font-size:7.8px;color:#fff;width:66px;text-align:center;letter-spacing:0.800px">AUTO</div>
<div class="abs" style="left:830px;top:567.2px;width:142px;height:1px;background:#24243a;"></div>
<div class="abs" style="left:831px;top:570px;width:139.3px;height:16.7px;background:#00a3ff;border-radius:1px"></div>
<div class="li" style="left:833.8px;top:575.3px;color:#fff;font-weight:normal;-webkit-text-stroke:0.220px">mean</div>
<div class="li" style="left:833.8px;top:593.4px;color:#f1f1f3;font-weight:normal;-webkit-text-stroke:0.220px">median</div>
<div class="li" style="left:833.8px;top:611.5px;color:#f1f1f3;font-weight:normal;-webkit-text-stroke:0.220px">last</div>
<!--/MAIN-->
</div>
</body>
</html>
